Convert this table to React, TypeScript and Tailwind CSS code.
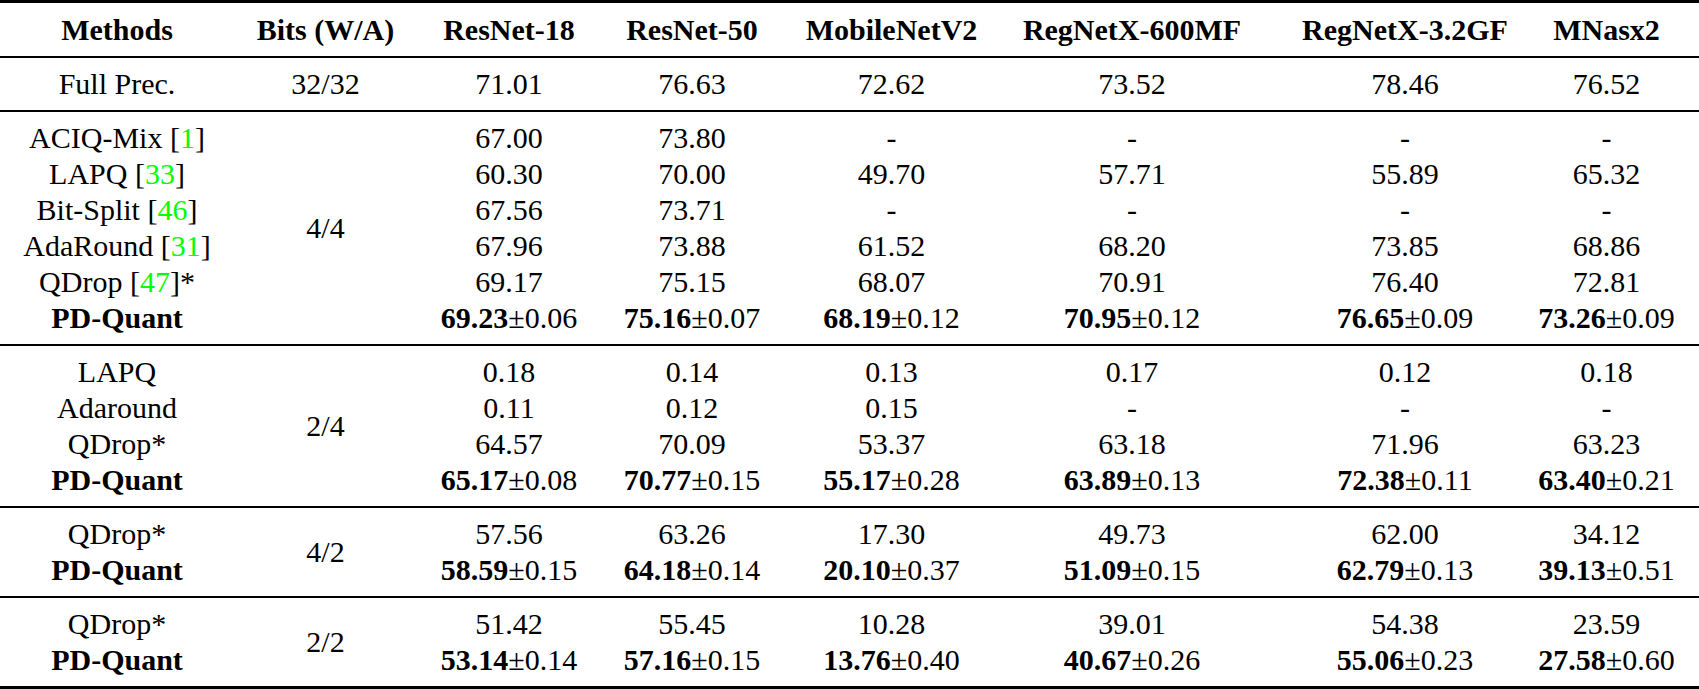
import React from "react";

type Cell = string | { b: string; pm: string };

type Group = {
  bits: string;
  rows: { method: React.ReactNode; bold?: boolean; vals: Cell[] }[];
};

const colWidths = [234, 183, 184, 182, 217, 264, 266, 169];
const colPad = ["", "", "", "", "", "", "pl-4", "pr-4"];

const headers = [
  "Methods",
  "Bits (W/A)",
  "ResNet-18",
  "ResNet-50",
  "MobileNetV2",
  "RegNetX-600MF",
  "RegNetX-3.2GF",
  "MNasx2",
];

const Cite = ({ n }: { n: string }) => (
  <>
    [<span className="text-[#00ff00]">{n}</span>]
  </>
);

const pm = (b: string, p: string): Cell => ({ b, pm: p });

const groups: Group[] = [
  {
    bits: "4/4",
    rows: [
      { method: <>ACIQ-Mix <Cite n="1" /></>, vals: ["67.00", "73.80", "-", "-", "-", "-"] },
      { method: <>LAPQ <Cite n="33" /></>, vals: ["60.30", "70.00", "49.70", "57.71", "55.89", "65.32"] },
      { method: <>Bit-Split <Cite n="46" /></>, vals: ["67.56", "73.71", "-", "-", "-", "-"] },
      { method: <>AdaRound <Cite n="31" /></>, vals: ["67.96", "73.88", "61.52", "68.20", "73.85", "68.86"] },
      { method: <>QDrop <Cite n="47" />*</>, vals: ["69.17", "75.15", "68.07", "70.91", "76.40", "72.81"] },
      {
        method: "PD-Quant",
        bold: true,
        vals: [pm("69.23", "0.06"), pm("75.16", "0.07"), pm("68.19", "0.12"), pm("70.95", "0.12"), pm("76.65", "0.09"), pm("73.26", "0.09")],
      },
    ],
  },
  {
    bits: "2/4",
    rows: [
      { method: "LAPQ", vals: ["0.18", "0.14", "0.13", "0.17", "0.12", "0.18"] },
      { method: "Adaround", vals: ["0.11", "0.12", "0.15", "-", "-", "-"] },
      { method: "QDrop*", vals: ["64.57", "70.09", "53.37", "63.18", "71.96", "63.23"] },
      {
        method: "PD-Quant",
        bold: true,
        vals: [pm("65.17", "0.08"), pm("70.77", "0.15"), pm("55.17", "0.28"), pm("63.89", "0.13"), pm("72.38", "0.11"), pm("63.40", "0.21")],
      },
    ],
  },
  {
    bits: "4/2",
    rows: [
      { method: "QDrop*", vals: ["57.56", "63.26", "17.30", "49.73", "62.00", "34.12"] },
      {
        method: "PD-Quant",
        bold: true,
        vals: [pm("58.59", "0.15"), pm("64.18", "0.14"), pm("20.10", "0.37"), pm("51.09", "0.15"), pm("62.79", "0.13"), pm("39.13", "0.51")],
      },
    ],
  },
  {
    bits: "2/2",
    rows: [
      { method: "QDrop*", vals: ["51.42", "55.45", "10.28", "39.01", "54.38", "23.59"] },
      {
        method: "PD-Quant",
        bold: true,
        vals: [pm("53.14", "0.14"), pm("57.16", "0.15"), pm("13.76", "0.40"), pm("40.67", "0.26"), pm("55.06", "0.23"), pm("27.58", "0.60")],
      },
    ],
  },
];

function Value({ v }: { v: Cell }) {
  if (typeof v === "string") return <>{v}</>;
  return (
    <>
      <b className="font-bold">{v.b}</b>±{v.pm}
    </>
  );
}

export default function App() {
  return (
    <div className="bg-white w-[1699px] h-[689px] text-black font-[family-name:Liberation_Serif,Times_New_Roman,serif] text-[30px] leading-[36px]">
      <table className="w-[1697px] table-fixed border-collapse text-center">
        <colgroup>
          {colWidths.map((w, i) => (
            <col key={i} style={{ width: w }} />
          ))}
        </colgroup>
        <thead>
          <tr className="border-t-[3px] border-b-2 border-black">
            {headers.map((h, i) => (
              <th key={h} className={`font-bold pt-[9px] pb-[8px] whitespace-nowrap ${colPad[i]}`}>
                {h}
              </th>
            ))}
          </tr>
        </thead>
        <tbody className="border-b-2 border-black">
          <tr>
            {["Full Prec.", "32/32", "71.01", "76.63", "72.62", "73.52", "78.46", "76.52"].map((t, i) => (
              <td key={i} className={`py-2 whitespace-nowrap ${colPad[i]}`}>
                {t}
              </td>
            ))}
          </tr>
        </tbody>
        {groups.map((g, gi) => (
          <tbody
            key={g.bits}
            className={gi === groups.length - 1 ? "border-b-[3px] border-black" : "border-b-2 border-black"}
          >
            {g.rows.map((r, ri) => {
              const first = ri === 0;
              const last = ri === g.rows.length - 1;
              const pad = `${first ? "pt-2" : ""} ${last ? "pb-2" : ""}`;
              return (
                <tr key={ri}>
                  <td className={`whitespace-nowrap ${pad} ${r.bold ? "font-bold" : ""}`}>{r.method}</td>
                  {first && (
                    <td rowSpan={g.rows.length} className="align-middle">
                      {g.bits}
                    </td>
                  )}
                  {r.vals.map((v, vi) => (
                    <td key={vi} className={`whitespace-nowrap ${pad} ${colPad[vi + 2]}`}>
                      <Value v={v} />
                    </td>
                  ))}
                </tr>
              );
            })}
          </tbody>
        ))}
      </table>
    </div>
  );
}
